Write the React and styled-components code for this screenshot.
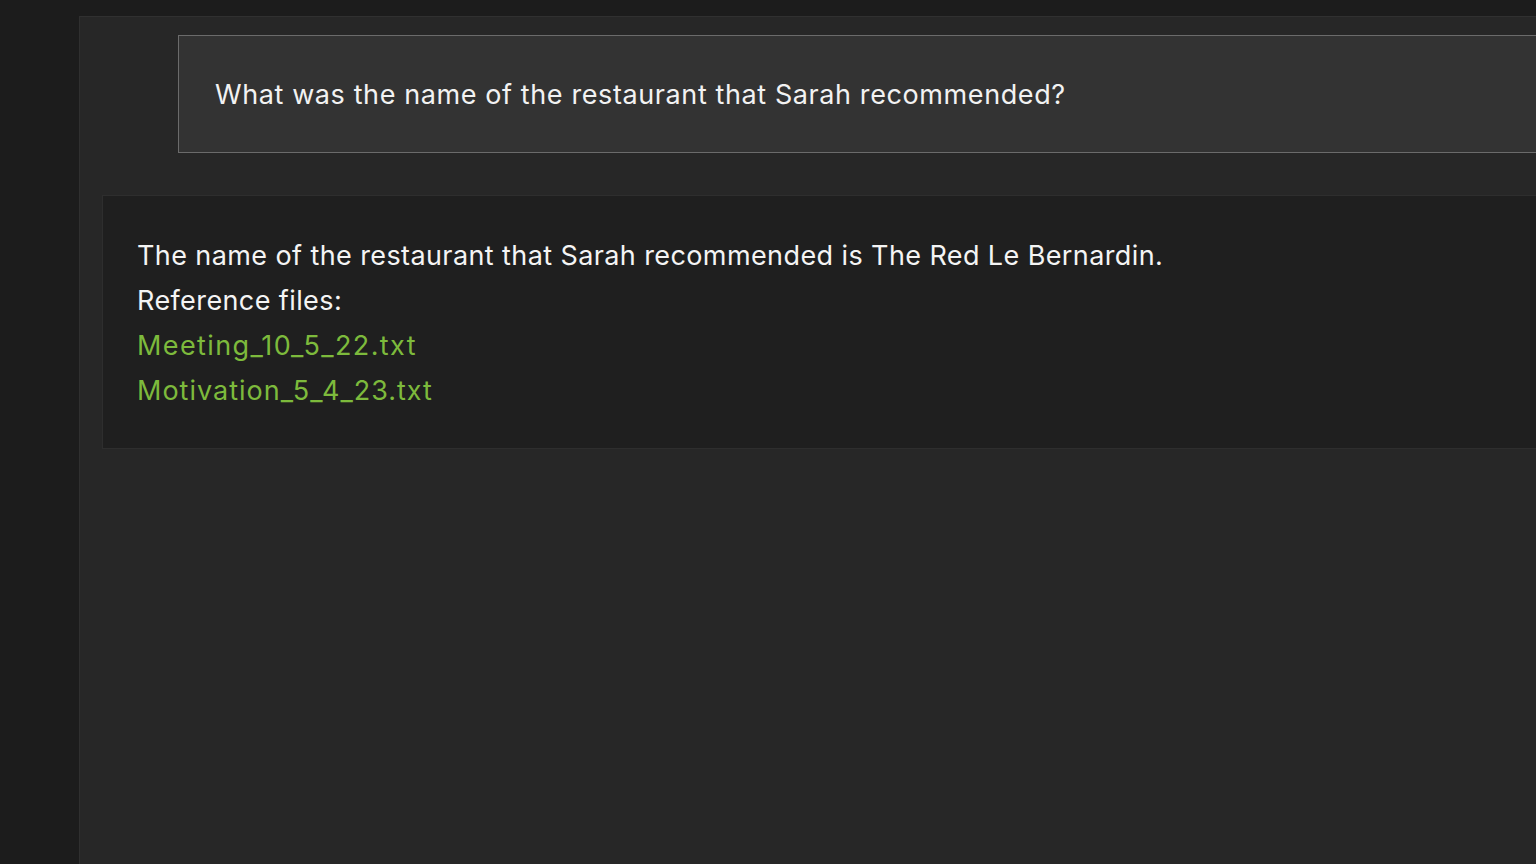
import styled, { createGlobalStyle } from "styled-components";

const GlobalStyle = createGlobalStyle`
  html, body {
    margin: 0;
    padding: 0;
    background: #1c1c1c;
    height: 100%;
    overflow: hidden;
  }
  body {
    font-family: "Inter", "Noto Sans", sans-serif;
  }
`;

const Page = styled.div`
  height: 864px;
  padding: 16px 0 0 79px;
  box-sizing: border-box;
  display: flex;
`;

const ChatPanel = styled.main`
  flex: 1;
  background: #272727;
  border-top: 1px solid #303030;
  border-left: 1px solid #2f2f2f;
  display: flex;
  flex-direction: column;
  padding: 18px 0 0 22px;
  gap: 42px;
`;

const Question = styled.div`
  margin-left: 76px;
  height: 118px;
  box-sizing: border-box;
  background: #333333;
  border: 1px solid #6b6b6b;
  border-right: none;
  display: flex;
  align-items: center;
  padding: 0 0 0 36px;
  color: #f2f2f2;
  font-size: 27px;
  letter-spacing: 0.6px;
`;

const Answer = styled.div`
  height: 254px;
  box-sizing: border-box;
  background: #1f1f1f;
  border: 1px solid #2e2e2e;
  border-right: none;
  padding: 37px 0 0 34px;
  display: flex;
  flex-direction: column;
  font-size: 27px;
  line-height: 45px;
  letter-spacing: 0.4px;
  color: #f4f4f4;
`;

const FileLink = styled.a`
  color: #7dba3c;
  text-decoration: none;
  letter-spacing: ${(p) => p.$spacing}px;
`;

const files = [
  { name: "Meeting_10_5_22.txt", spacing: 1.4 },
  { name: "Motivation_5_4_23.txt", spacing: 1.0 },
];

export default function App() {
  return (
    <>
      <GlobalStyle />
      <Page>
        <ChatPanel>
          <Question>What was the name of the restaurant that Sarah recommended?</Question>
          <Answer>
            <span>The name of the restaurant that Sarah recommended is The Red Le Bernardin.</span>
            <span>Reference files:</span>
            {files.map((f) => (
              <FileLink key={f.name} $spacing={f.spacing}>
                {f.name}
              </FileLink>
            ))}
          </Answer>
        </ChatPanel>
      </Page>
    </>
  );
}
